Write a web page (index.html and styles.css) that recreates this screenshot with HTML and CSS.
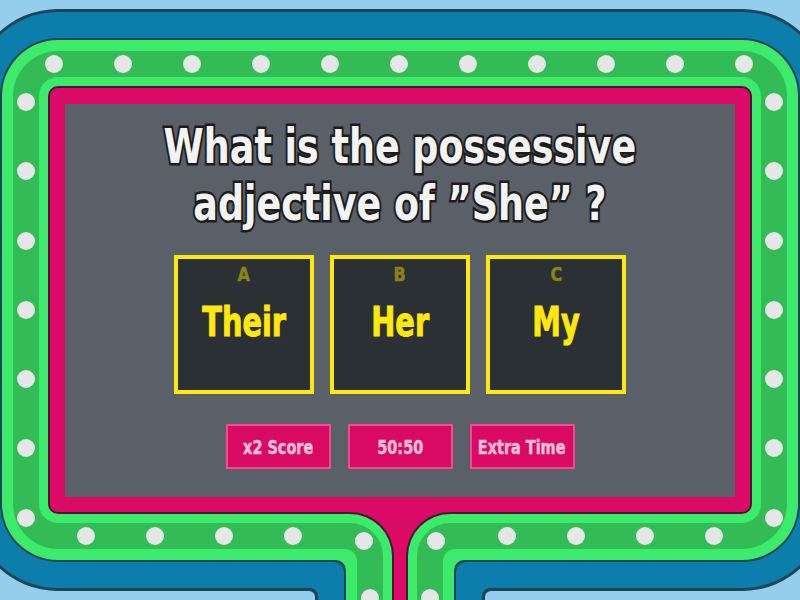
FILE: index.html
```html
<!DOCTYPE html>
<html lang="en">

<head>
    <meta charset="UTF-8">
    <meta name="viewport" content="width=device-width, initial-scale=1.0">
    <title>Quiz Show</title>
    <link rel="stylesheet" href="styles.css">
</head>

<body>

    <div class="stage">
        <!-- stage frame: blue rim, green light ring and pink bezel with the stem below -->
        <svg class="frame-art" width="800" height="600" viewBox="0 0 800 600">
            <path class="rim-edge" d="M 58 9 H 742 A 87 87 0 0 1 829 96 V 504 A 87 87 0 0 1 742 591 H 491 A 6 6 0 0 0 485 597 V 620 H 315 V 597 A 6 6 0 0 0 309 591 H 58 A 87 87 0 0 1 -29 504 V 96 A 87 87 0 0 1 58 9 Z"/>
            <path class="rim" d="M 58 12 H 742 A 84 84 0 0 1 826 96 V 504 A 84 84 0 0 1 742 588 H 490 A 8 8 0 0 0 482 596 V 620 H 318 V 596 A 8 8 0 0 0 310 588 H 58 A 84 84 0 0 1 -26 504 V 96 A 84 84 0 0 1 58 12 Z"/>
            <path class="rim-edge" d="M 58 38 H 742 A 58 58 0 0 1 800 96 V 504 A 58 58 0 0 1 742 562 H 466 A 10 10 0 0 0 456 572 V 620 H 344 V 572 A 10 10 0 0 0 334 562 H 58 A 58 58 0 0 1 0 504 V 96 A 58 58 0 0 1 58 38 Z"/>
            <path class="ring-light" d="M 58 40 H 742 A 56 56 0 0 1 798 96 V 504 A 56 56 0 0 1 742 560 H 464 A 10 10 0 0 0 454 570 V 620 H 346 V 570 A 10 10 0 0 0 336 560 H 58 A 56 56 0 0 1 2 504 V 96 A 56 56 0 0 1 58 40 Z"/>
            <path class="ring-dark" d="M 58 51 H 742 A 45 45 0 0 1 787 96 V 504 A 45 45 0 0 1 742 549 H 455 A 12 12 0 0 0 443 561 V 620 H 357 V 561 A 12 12 0 0 0 345 549 H 58 A 45 45 0 0 1 13 504 V 96 A 45 45 0 0 1 58 51 Z"/>
            <path class="ring-light" d="M 58 77 H 742 A 19 19 0 0 1 761 96 V 504 A 19 19 0 0 1 742 523 H 450 A 33 33 0 0 0 417 556 V 620 H 383 V 556 A 33 33 0 0 0 350 523 H 58 A 19 19 0 0 1 39 504 V 96 A 19 19 0 0 1 58 77 Z"/>
            <path class="bezel-edge" d="M 58 86 H 742 A 10 10 0 0 1 752 96 V 504 A 10 10 0 0 1 742 514 H 450 A 42 42 0 0 0 408 556 V 620 H 392 V 556 A 42 42 0 0 0 350 514 H 58 A 10 10 0 0 1 48 504 V 96 A 10 10 0 0 1 58 86 Z"/>
            <path class="bezel" d="M 58 88 H 742 A 8 8 0 0 1 750 96 V 504 A 8 8 0 0 1 742 512 H 450 A 44 44 0 0 0 406 556 V 620 H 394 V 556 A 44 44 0 0 0 350 512 H 58 A 8 8 0 0 1 50 504 V 96 A 8 8 0 0 1 58 88 Z"/>

            <g class="bulbs">
                <!-- top row -->
                <circle cx="54" cy="64" r="9"/>
                <circle cx="123" cy="64" r="9"/>
                <circle cx="192" cy="64" r="9"/>
                <circle cx="261" cy="64" r="9"/>
                <circle cx="330" cy="64" r="9"/>
                <circle cx="399" cy="64" r="9"/>
                <circle cx="468" cy="64" r="9"/>
                <circle cx="537" cy="64" r="9"/>
                <circle cx="606" cy="64" r="9"/>
                <circle cx="675" cy="64" r="9"/>
                <circle cx="744" cy="64" r="9"/>
                <!-- left side -->
                <circle cx="26" cy="102" r="9"/>
                <circle cx="26" cy="171" r="9"/>
                <circle cx="26" cy="241" r="9"/>
                <circle cx="26" cy="310" r="9"/>
                <circle cx="26" cy="379" r="9"/>
                <circle cx="26" cy="448" r="9"/>
                <circle cx="26" cy="518" r="9"/>
                <!-- right side -->
                <circle cx="774" cy="102" r="9"/>
                <circle cx="774" cy="171" r="9"/>
                <circle cx="774" cy="241" r="9"/>
                <circle cx="774" cy="310" r="9"/>
                <circle cx="774" cy="379" r="9"/>
                <circle cx="774" cy="448" r="9"/>
                <circle cx="774" cy="518" r="9"/>
                <!-- bottom, bending round the stem -->
                <circle cx="86" cy="536" r="9"/>
                <circle cx="155" cy="536" r="9"/>
                <circle cx="224" cy="536" r="9"/>
                <circle cx="293" cy="536" r="9"/>
                <circle cx="364" cy="541" r="9"/>
                <circle cx="370" cy="598" r="9"/>
                <circle cx="430" cy="598" r="9"/>
                <circle cx="436" cy="541" r="9"/>
                <circle cx="507" cy="536" r="9"/>
                <circle cx="576" cy="536" r="9"/>
                <circle cx="645" cy="536" r="9"/>
                <circle cx="714" cy="536" r="9"/>
            </g>
        </svg>

        <main class="screen">
            <h1 class="question">What is the possessive<br>adjective of ”She” ?</h1>

            <div class="answers">
                <div class="answer">
                    <span class="answer-letter">A</span>
                    <span class="answer-word">Their</span>
                </div>
                <div class="answer">
                    <span class="answer-letter">B</span>
                    <span class="answer-word">Her</span>
                </div>
                <div class="answer">
                    <span class="answer-letter">C</span>
                    <span class="answer-word">My</span>
                </div>
            </div>

            <div class="powerups">
                <button class="powerup"><span class="powerup-label">x2 Score</span></button>
                <button class="powerup"><span class="powerup-label">50:50</span></button>
                <button class="powerup"><span class="powerup-label">Extra Time</span></button>
            </div>
        </main>
    </div>

</body>

</html>
```

FILE: styles.css
```css
body {
    margin: 0;
    padding: 0;
    background-color: #93cfec;
    font-family: "DejaVu Sans", "Liberation Sans", sans-serif;
    font-weight: bold;
}

.stage {
    display: grid;
    width: 800px;
    height: 600px;
    overflow: hidden;
}

/* frame art and screen share the one grid cell */
.frame-art,
.screen {
    grid-area: 1 / 1;
}

.rim-edge {
    fill: #1f4658;
}

.rim {
    fill: #0b7eac;
}

.ring-light {
    fill: #3ceb6a;
}

.ring-dark {
    fill: #33bc56;
}

.bezel-edge {
    fill: #4b1631;
}

.bezel {
    fill: #dc0a67;
}

.bulbs circle {
    fill: #e6e6e6;
}

.screen {
    margin: 104px 65px 103px;
    background-color: #596068;
    display: flex;
    flex-direction: column;
    align-items: center;
}

/* the game font is a condensed heavy face, so squeeze the text */
.question {
    margin: 0;
    padding-top: 14px;
    font-size: 48px;
    line-height: 57px;
    font-weight: bold;
    text-align: center;
    white-space: nowrap;
    color: #f3f3f3;
    -webkit-text-stroke: 5px #1c1c1c;
    paint-order: stroke fill;
    transform: scaleX(0.76);
}

.answers {
    display: flex;
    gap: 16px;
    margin-top: 23px;
}

.answer {
    box-sizing: border-box;
    width: 140px;
    height: 139px;
    border: 4px solid #ffe80a;
    background-color: #2b3035;
    display: flex;
    flex-direction: column;
    align-items: center;
    padding-top: 5px;
}

.answer-letter {
    font-size: 20px;
    line-height: 20px;
    color: #8a8415;
    -webkit-text-stroke: 0.5px #8a8415;
    transform: scaleX(0.8);
}

.answer-word {
    margin-top: 18px;
    font-size: 40px;
    line-height: 40px;
    color: #ffe80a;
    -webkit-text-stroke: 1px #ffe80a;
    white-space: nowrap;
    transform: scaleX(0.72);
}

.powerups {
    display: flex;
    gap: 17px;
    margin-top: 30px;
}

.powerup {
    box-sizing: border-box;
    width: 105px;
    height: 45px;
    padding: 0;
    border: 2px solid #f24b8e;
    background-color: #d80a63;
    display: flex;
    align-items: center;
    justify-content: center;
    font-family: inherit;
}

.powerup-label {
    display: inline-block;
    white-space: nowrap;
    font-weight: bold;
    font-size: 19px;
    color: #ffbfdb;
    -webkit-text-stroke: 0.5px #ffbfdb;
    transform: scaleX(0.76);
}
```
